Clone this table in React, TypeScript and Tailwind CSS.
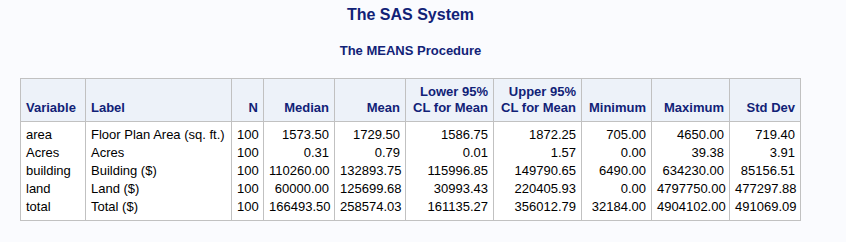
import React from 'react';

const cols = 'grid grid-cols-[65px_146px_32px_71px_71px_88px_88px_70px_78px_71px]';

const headers: { top?: string; bottom: string; left?: boolean }[] = [
  { bottom: 'Variable', left: true },
  { bottom: 'Label', left: true },
  { bottom: 'N' },
  { bottom: 'Median' },
  { bottom: 'Mean' },
  { top: 'Lower 95%', bottom: 'CL for Mean' },
  { top: 'Upper 95%', bottom: 'CL for Mean' },
  { bottom: 'Minimum' },
  { bottom: 'Maximum' },
  { bottom: 'Std Dev' },
];

const rows: string[][] = [
  ['area', 'Floor Plan Area (sq. ft.)', '100', '1573.50', '1729.50', '1586.75', '1872.25', '705.00', '4650.00', '719.40'],
  ['Acres', 'Acres', '100', '0.31', '0.79', '0.01', '1.57', '0.00', '39.38', '3.91'],
  ['building', 'Building ($)', '100', '110260.00', '132893.75', '115996.85', '149790.65', '6490.00', '634230.00', '85156.51'],
  ['land', 'Land ($)', '100', '60000.00', '125699.68', '30993.43', '220405.93', '0.00', '4797750.00', '477297.88'],
  ['total', 'Total ($)', '100', '166493.50', '258574.03', '161135.27', '356012.79', '32184.00', '4904102.00', '491069.09'],
];

export default function App() {
  return (
    <div className="min-h-screen bg-[#fafbfe] pt-[5px] font-['Liberation_Sans',Arial,sans-serif]">
      <div className="ml-[20px] w-[781px]">
        <h1 className="text-center text-[16px] leading-[20px] font-bold text-[#112277]">The SAS System</h1>
        <h2 className="mt-[18px] text-center text-[13px] leading-[16px] font-bold text-[#112277]">
          The MEANS Procedure
        </h2>

        <div className="mt-[19px] border-t border-r border-b border-[#c1c1c1] bg-white">
          <div className={`${cols} border-b border-[#c1c1c1] bg-[#edf2f9]`}>
            {headers.map((h, i) => (
              <div
                key={i}
                className={`flex flex-col justify-end border-l border-[#c1c1c1] px-[5px] pt-[5px] pb-[5px] text-[13px] leading-[16px] font-bold text-[#112277] ${
                  h.left ? 'text-left' : 'text-right'
                }`}
              >
                {h.top && <span className="whitespace-nowrap">{h.top}</span>}
                <span className="whitespace-nowrap">{h.bottom}</span>
              </div>
            ))}
          </div>

          {rows.map((r, ri) => (
            <div key={ri} className={cols}>
              {r.map((c, ci) => (
                <div
                  key={ci}
                  className={`whitespace-nowrap border-l border-[#c1c1c1] px-[5px] text-[13px] leading-[18px] text-black ${
                    ci < 2 ? 'text-left' : 'text-right'
                  } ${ri === 0 ? 'pt-[4px]' : ''} ${ri === rows.length - 1 ? 'pb-[4px]' : ''}`}
                >
                  {c}
                </div>
              ))}
            </div>
          ))}
        </div>
      </div>
    </div>
  );
}
